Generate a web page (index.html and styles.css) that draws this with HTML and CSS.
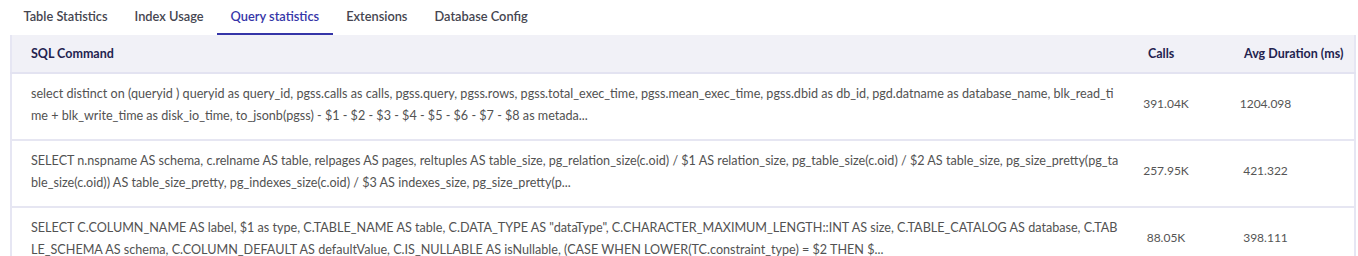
FILE: index.html
```html
<!DOCTYPE html>
<html lang="en">
<head>
    <meta charset="UTF-8">
    <meta name="viewport" content="width=device-width, initial-scale=1.0">
    <title>Query statistics</title>
    <link rel="stylesheet" href="styles.css">
</head>
<body>
    <div class="page">
        <nav class="tabs">
            <a class="tab">Table Statistics</a>
            <a class="tab">Index Usage</a>
            <a class="tab active">Query statistics</a>
            <a class="tab">Extensions</a>
            <a class="tab">Database Config</a>
        </nav>

        <table class="stats">
            <colgroup>
                <col class="col-sql">
                <col class="col-calls">
                <col class="col-avg">
            </colgroup>
            <thead>
                <tr>
                    <th>SQL Command</th>
                    <th>Calls</th>
                    <th>Avg Duration (ms)</th>
                </tr>
            </thead>
            <tbody>
                <tr>
                    <td class="sql">select distinct on (queryid ) queryid as query_id, pgss.calls as calls, pgss.query, pgss.rows, pgss.total_exec_time, pgss.mean_exec_time, pgss.dbid as db_id, pgd.datname as database_name, blk_read_time + blk_write_time as disk_io_time, to_jsonb(pgss) - $1 - $2 - $3 - $4 - $5 - $6 - $7 - $8 as metada...</td>
                    <td class="num calls">391.04K</td>
                    <td class="num avg">1204.098</td>
                </tr>
                <tr>
                    <td class="sql">SELECT n.nspname AS schema, c.relname AS table, relpages AS pages, reltuples AS table_size, pg_relation_size(c.oid) / $1 AS relation_size, pg_table_size(c.oid) / $2 AS table_size, pg_size_pretty(pg_table_size(c.oid)) AS table_size_pretty, pg_indexes_size(c.oid) / $3 AS indexes_size, pg_size_pretty(p...</td>
                    <td class="num calls">257.95K</td>
                    <td class="num avg">421.322</td>
                </tr>
                <tr>
                    <td class="sql">SELECT C.COLUMN_NAME AS label, $1 as type, C.TABLE_NAME AS table, C.DATA_TYPE AS "dataType", C.CHARACTER_MAXIMUM_LENGTH::INT AS size, C.TABLE_CATALOG AS database, C.TABLE_SCHEMA AS schema, C.COLUMN_DEFAULT AS defaultValue, C.IS_NULLABLE AS isNullable, (CASE WHEN LOWER(TC.constraint_type) = $2 THEN $...</td>
                    <td class="num calls">88.05K</td>
                    <td class="num avg">398.111</td>
                </tr>
            </tbody>
        </table>
    </div>
</body>
</html>
```

FILE: styles.css
```css
* {
    margin: 0;
    padding: 0;
    box-sizing: border-box;
}

body {
    font-family: Lato, "Noto Sans", sans-serif;
    background: #ffffff;
    color: #555555;
}

.page {
    padding: 0 2px 0 10px;
}

/* tabs */
.tabs {
    display: flex;
    height: 35px;
}

.tab {
    display: flex;
    align-items: center;
    padding: 0 13.5px 2px;
    font-size: 12.8px;
    font-weight: 600;
    color: #454550;
    border-bottom: 2px solid transparent;
    cursor: pointer;
}

.tab.active {
    color: #3535a8;
    border-bottom-color: #3535a8;
}

/* table */
.stats {
    width: 100%;
    border-collapse: collapse;
    table-layout: fixed;
    border-left: 2px solid #e6e6f3;
    border-right: 2px solid #e6e6f3;
}

.col-sql {
    width: 1116px;
}

.col-calls {
    width: 96px;
}

.stats thead th {
    background: #f1f1f7;
    height: 38px;
    padding: 0 0 0 21px;
    text-align: left;
    font-size: 12.5px;
    font-weight: 700;
    color: #23234f;
    border-bottom: 2px solid #e3e3f1;
}

.stats thead th:first-child {
    padding-left: 19px;
}

.stats td {
    font-size: 12.6px;
    line-height: 22px;
    padding: 9px 0 12px;
    border-bottom: 2px solid #e6e6f2;
    vertical-align: middle;
}

.stats td.sql {
    padding-left: 19px;
    padding-right: 6px;
    word-break: break-all;
    color: #525252;
}

.stats td.num {
    font-size: 12px;
    text-align: center;
    color: #555555;
    padding-bottom: 15px;
}

.stats td.calls {
    padding-right: 18px;
}

.stats td.avg {
    padding-right: 46px;
}
```
